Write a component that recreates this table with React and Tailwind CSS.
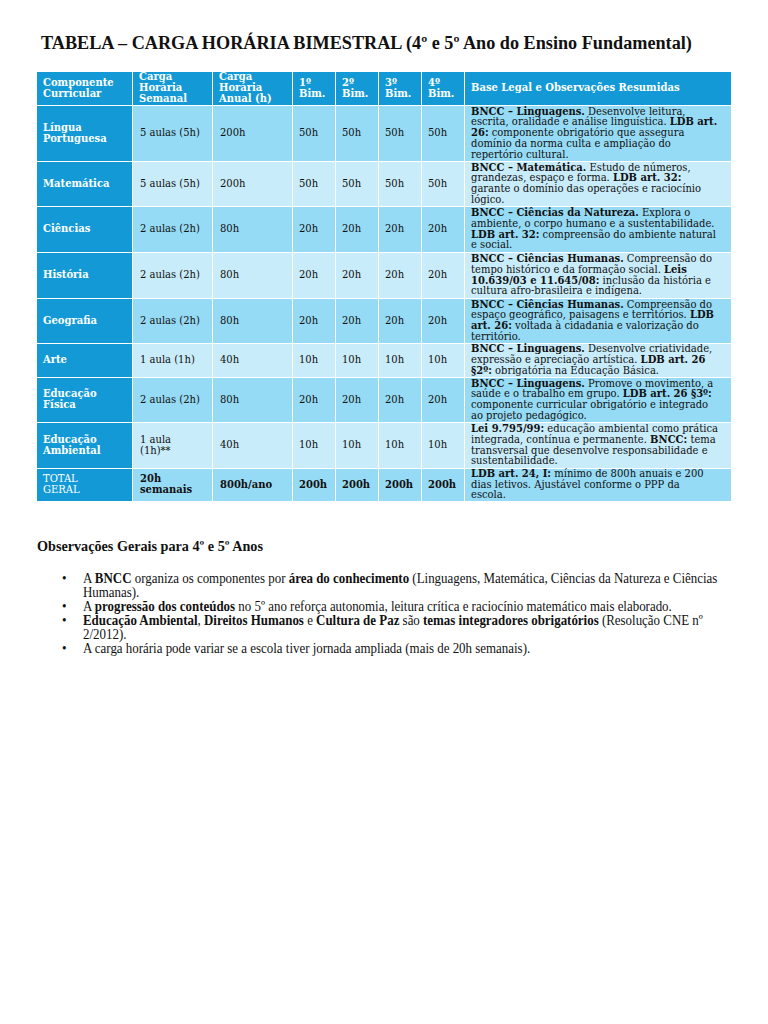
import React from 'react';

const DARK = 'bg-[#139ad6]';
const rows = [
  {
    name: <>Língua<br />Portuguesa</>, weekly: '5 aulas (5h)', annual: '200h', bim: '50h', h: 'h-[55px]', tone: 'a',
    note: <><b>BNCC – Linguagens.</b> Desenvolve leitura,<br />escrita, oralidade e análise linguística. <b>LDB art.</b><br /><b>26:</b> componente obrigatório que assegura<br />domínio da norma culta e ampliação do<br />repertório cultural.</>,
  },
  {
    name: 'Matemática', weekly: '5 aulas (5h)', annual: '200h', bim: '50h', h: 'h-[44px]', tone: 'b',
    note: <><b>BNCC – Matemática.</b> Estudo de números,<br />grandezas, espaço e forma. <b>LDB art. 32:</b><br />garante o domínio das operações e raciocínio<br />lógico.</>,
  },
  {
    name: 'Ciências', weekly: '2 aulas (2h)', annual: '80h', bim: '20h', h: 'h-[45px]', tone: 'a',
    note: <><b>BNCC – Ciências da Natureza.</b> Explora o<br />ambiente, o corpo humano e a sustentabilidade.<br /><b>LDB art. 32:</b> compreensão do ambiente natural<br />e social.</>,
  },
  {
    name: 'História', weekly: '2 aulas (2h)', annual: '80h', bim: '20h', h: 'h-[45px]', tone: 'b',
    note: <><b>BNCC – Ciências Humanas.</b> Compreensão do<br />tempo histórico e da formação social. <b>Leis</b><br /><b>10.639/03 e 11.645/08:</b> inclusão da história e<br />cultura afro-brasileira e indígena.</>,
  },
  {
    name: 'Geografia', weekly: '2 aulas (2h)', annual: '80h', bim: '20h', h: 'h-[44px]', tone: 'a',
    note: <><b>BNCC – Ciências Humanas.</b> Compreensão do<br />espaço geográfico, paisagens e territórios. <b>LDB</b><br /><b>art. 26:</b> voltada à cidadania e valorização do<br />território.</>,
  },
  {
    name: 'Arte', weekly: '1 aula (1h)', annual: '40h', bim: '10h', h: 'h-[33px]', tone: 'b',
    note: <><b>BNCC – Linguagens.</b> Desenvolve criatividade,<br />expressão e apreciação artística. <b>LDB art. 26</b><br /><b>§2º:</b> obrigatória na Educação Básica.</>,
  },
  {
    name: <>Educação<br />Física</>, weekly: '2 aulas (2h)', annual: '80h', bim: '20h', h: 'h-[44px]', tone: 'a',
    note: <><b>BNCC – Linguagens.</b> Promove o movimento, a<br />saúde e o trabalho em grupo. <b>LDB art. 26 §3º:</b><br />componente curricular obrigatório e integrado<br />ao projeto pedagógico.</>,
  },
  {
    name: <>Educação<br />Ambiental</>, weekly: <>1 aula<br />(1h)**</>, annual: '40h', bim: '10h', h: 'h-[45px]', tone: 'b',
    note: <><b>Lei 9.795/99:</b> educação ambiental como prática<br />integrada, contínua e permanente. <b>BNCC:</b> tema<br />transversal que desenvolve responsabilidade e<br />sustentabilidade.</>,
  },
];

const headers = [
  <>Componente<br />Curricular</>,
  <>Carga<br />Horária<br />Semanal</>,
  <>Carga<br />Horária<br />Anual (h)</>,
  <>1º<br />Bim.</>,
  <>2º<br />Bim.</>,
  <>3º<br />Bim.</>,
  <>4º<br />Bim.</>,
  'Base Legal e Observações Resumidas',
];

const bullets = [
  <>A <b>BNCC</b> organiza os componentes por <b>área do conhecimento</b> (Linguagens, Matemática, Ciências da Natureza e Ciências Humanas).</>,
  <>A <b>progressão dos conteúdos</b> no 5º ano reforça autonomia, leitura crítica e raciocínio matemático mais elaborado.</>,
  <><b>Educação Ambiental</b>, <b>Direitos Humanos</b> e <b>Cultura de Paz</b> são <b>temas integradores obrigatórios</b> (Resolução CNE nº 2/2012).</>,
  <>A carga horária pode variar se a escola tiver jornada ampliada (mais de 20h semanais).</>,
];

export default function App() {
  return (
    <div className="w-[768px] min-h-[1024px] bg-white text-[#111] font-['Liberation_Serif',serif]">
      <h1 className="pt-[32px] pl-[41px] text-[18.2px] font-bold leading-[22px]">
        TABELA – CARGA HORÁRIA BIMESTRAL (4º e 5º Ano do Ensino Fundamental)
      </h1>

      <div className="pl-[36px] pt-[17px]">
        <table className="border-separate border-spacing-px text-[11.1px] leading-[10.7px] font-['DejaVu_Serif',serif] font-stretch-condensed">
          <colgroup>
            <col className="w-[95px]" />
            <col className="w-[79px]" />
            <col className="w-[79px]" />
            <col className="w-[42px]" />
            <col className="w-[42px]" />
            <col className="w-[42px]" />
            <col className="w-[42px]" />
            <col className="w-[266px]" />
          </colgroup>
          <thead>
            <tr className="h-[33px]">
              {headers.map((hd, i) => (
                <th key={i} className={`${DARK} text-white font-bold text-left align-middle px-[6px] py-0`}>
                  {hd}
                </th>
              ))}
            </tr>
          </thead>
          <tbody>
            {rows.map((r, i) => {
              const bg = r.tone === 'a' ? 'bg-[#96dbf5]' : 'bg-[#c9ecfa]';
              return (
                <tr key={i} className={r.h}>
                  <td className={`${DARK} text-white font-bold px-[6px] align-middle`}>{r.name}</td>
                  <td className={`${bg} px-[7px] align-middle`}>{r.weekly}</td>
                  <td className={`${bg} px-[7px] align-middle`}>{r.annual}</td>
                  {[0, 1, 2, 3].map(k => (
                    <td key={k} className={`${bg} px-[6px] align-middle`}>{r.bim}</td>
                  ))}
                  <td className={`${bg} pl-[6px] pr-0 align-middle whitespace-nowrap`}>{r.note}</td>
                </tr>
              );
            })}
            <tr className="h-[32px]">
              <td className={`${DARK} text-white px-[6px] align-middle`}>TOTAL<br />GERAL</td>
              <td className="bg-[#96dbf5] px-[7px] font-bold align-middle">20h<br />semanais</td>
              <td className="bg-[#96dbf5] px-[7px] font-bold align-middle">800h/ano</td>
              {[0, 1, 2, 3].map(k => (
                <td key={k} className="bg-[#96dbf5] px-[6px] font-bold align-middle">200h</td>
              ))}
              <td className="bg-[#96dbf5] pl-[6px] pr-0 align-middle whitespace-nowrap">
                <b>LDB art. 24, I:</b> mínimo de 800h anuais e 200<br />dias letivos. Ajustável conforme o PPP da<br />escola.
              </td>
            </tr>
          </tbody>
        </table>
      </div>

      <h2 className="ml-[37px] pt-[35px] w-[300px] text-[15px] font-bold leading-[18px] scale-x-[0.945] origin-left">
        Observações Gerais para 4º e 5º Anos
      </h2>

      <ul className="ml-[62px] mt-[17px] w-[727px] text-[14px] leading-[14px] scale-x-[0.923] origin-left">
        {bullets.map((b, i) => (
          <li key={i} className="flex">
            <span className="w-[22.75px] shrink-0">•</span>
            <span>{b}</span>
          </li>
        ))}
      </ul>
    </div>
  );
}
